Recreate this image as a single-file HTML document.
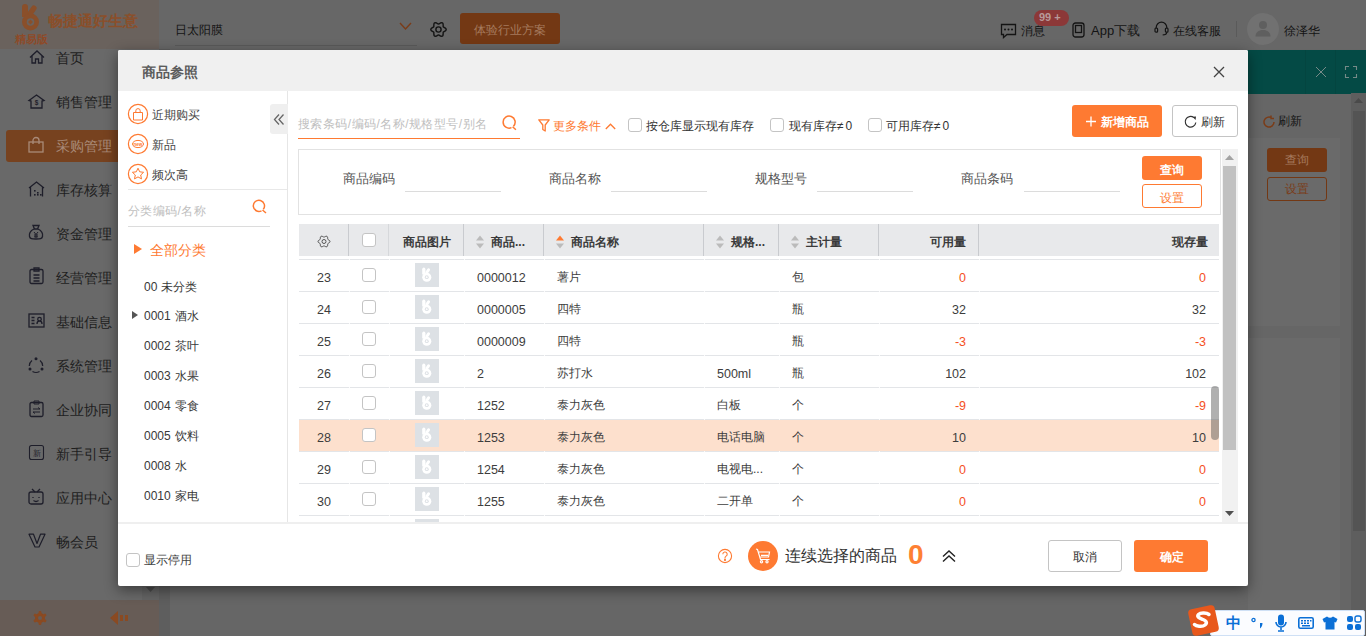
<!DOCTYPE html>
<html><head><meta charset="utf-8">
<style>
*{box-sizing:border-box;margin:0;padding:0}
html,body{width:1366px;height:636px;overflow:hidden;background:#666;font-family:"Liberation Sans",sans-serif;font-size:13px;color:#333}
.a{position:absolute}
.t{position:absolute;white-space:nowrap;line-height:1}
svg{position:absolute;overflow:visible}
.cb{position:absolute;width:14px;height:14px;border:1px solid #c4c4c4;border-radius:3px;background:#fff}
.hl{position:absolute;height:1px;background:#e3e5e8}
.vd{position:absolute;top:224px;width:1px;height:32px;background:#c9cbcf}
.c{position:absolute;white-space:nowrap;line-height:1;font-size:12px;color:#3d3d3d}
.r{color:#f5501e}
.img{position:absolute;left:415px;width:24px;height:24px;background:#dde1e5}
.tree{position:absolute;left:144px;font-size:12px;color:#383838;white-space:nowrap;line-height:1;word-spacing:.8px}
.mi{position:absolute;left:56px;font-size:14px;color:#1e1e1e;white-space:nowrap;line-height:1}
.sa{position:absolute;width:8px;height:13px}
</style></head><body>

<!-- ===== background app (dimmed) ===== -->
<div class="a" style="left:0;top:0;width:159px;height:636px;background:#696969"></div>
<div class="a" style="left:0;top:0;width:159px;height:49px;background:#6a625d"></div>
<div class="a" style="left:159px;top:0;width:1207px;height:49px;background:#676767"></div>
<div class="a" style="left:159px;top:49px;width:11px;height:587px;background:#5e5e5e"></div>
<div class="a" style="left:142px;top:560px;width:17px;height:40px;background:#646464"></div>
<svg style="left:146px;top:587px" width="9" height="6"><path d="M0 0h9l-4.5 5z" fill="#4a4a4a"/></svg>
<div class="a" style="left:0;top:600px;width:159px;height:36px;background:#675c56"></div>
<!-- bottom sidebar icons -->
<svg style="left:33px;top:611px" width="14" height="14" viewBox="0 0 14 14"><g fill="#8a4a22"><circle cx="7" cy="7" r="5"/><rect x="5.6" y="0" width="2.8" height="14" rx="1"/><rect x="5.6" y="0" width="2.8" height="14" rx="1" transform="rotate(60 7 7)"/><rect x="5.6" y="0" width="2.8" height="14" rx="1" transform="rotate(120 7 7)"/></g><circle cx="7" cy="7" r="2" fill="#675c56"/></svg>
<svg style="left:110px;top:611px" width="20" height="14" viewBox="0 0 20 14"><path d="M0 7L8 0v14z" fill="#8a4a22"/><rect x="10" y="4" width="3" height="6" fill="#8a4a22"/><rect x="15" y="4" width="3" height="6" fill="#8a4a22"/></svg>
<!-- logo -->
<svg style="left:20px;top:3px" width="20" height="28" viewBox="0 0 20 28"><path d="M2 4a3 3 0 0 1 6 0v10h-6z" fill="#8a4f2a"/><circle cx="10.5" cy="19" r="8.5" fill="#8a4f2a"/><rect x="9.5" y="2" width="5.5" height="11" rx="2.75" transform="rotate(35 12.25 7.5)" fill="#8a4f2a"/><circle cx="10.5" cy="19" r="3.8" fill="#6a625d"/><path d="M10.5 16.6l2.4 2.4-2.4 2.4-2.4-2.4z" fill="#8a4f2a"/></svg>
<div class="t" style="left:48px;top:13px;font-size:15px;color:#8a4f2a;font-weight:bold">畅捷通好生意</div>
<div class="t" style="left:15px;top:34px;font-size:10.5px;color:#8e4a28;font-weight:bold">精易版</div>
<!-- menu -->
<div class="a" style="left:6px;top:130px;width:112px;height:32px;background:#77421f;border-radius:3px 0 0 3px"></div>
<div class="mi" style="top:51px">首页</div>
<div class="mi" style="top:95px">销售管理</div>
<div class="mi" style="top:139px;color:#a98a78">采购管理</div>
<div class="mi" style="top:183px">库存核算</div>
<div class="mi" style="top:227px">资金管理</div>
<div class="mi" style="top:271px">经营管理</div>
<div class="mi" style="top:315px">基础信息</div>
<div class="mi" style="top:359px">系统管理</div>
<div class="mi" style="top:403px">企业协同</div>
<div class="mi" style="top:447px">新手引导</div>
<div class="mi" style="top:491px">应用中心</div>
<div class="mi" style="top:535px">畅会员</div>
<svg style="left:29px;top:50px" width="16" height="14" viewBox="0 0 16 14" fill="none" stroke="#1e1e2a" stroke-width="1.3"><path d="M1 7.5L8 1l7 6.5M3 6v7h3.5V9h3v4H13V6"/></svg>
<svg style="left:28px;top:94px" width="17" height="15" viewBox="0 0 17 15" fill="none" stroke="#1e1e2a" stroke-width="1.3"><path d="M1 6.5L8.5 1 16 6.5 14 7v7H3V7z"/><text x="8.5" y="10.5" font-size="6.5" text-anchor="middle" fill="#1e1e2a" stroke="none" font-weight="bold">$</text></svg>
<svg style="left:28px;top:137px" width="16" height="16" viewBox="0 0 16 16" fill="none" stroke="#a98a78" stroke-width="1.3"><rect x="1" y="5" width="14" height="10"/><path d="M5 7V3.5a3 3 0 0 1 6 0V7"/></svg>
<svg style="left:28px;top:181px" width="17" height="16" viewBox="0 0 17 16" fill="none" stroke="#1e1e2a" stroke-width="1.3"><path d="M1 7L8.5 1 16 7M2.5 6v9.5M14.5 6v9.5"/><g fill="#1e1e2a" stroke="none"><rect x="6" y="9" width="1.6" height="1.6"/><rect x="6" y="13" width="1.6" height="1.6"/><rect x="9" y="13" width="1.6" height="1.6"/><rect x="12" y="13" width="1.6" height="1.6"/><rect x="9" y="11" width="1.6" height="1.6"/></g></svg>
<svg style="left:28px;top:224px" width="16" height="16" viewBox="0 0 16 16" fill="none" stroke="#1e1e2a" stroke-width="1.3"><path d="M5 1.5h6L9.5 5h-3zM6 5C2 7 1 10 1.5 12.5 2 15 4 15 8 15s6 0 6.5-2.5C15 10 14 7 10 5"/><path d="M6 8l2 2.5L10 8M8 10.5v3.5M6 11h4M6 12.8h4" stroke-width="1"/></svg>
<svg style="left:29px;top:267px" width="15" height="17" viewBox="0 0 15 17" fill="none" stroke="#1e1e2a" stroke-width="1.3"><rect x="1" y="2.5" width="13" height="14" rx="1.5"/><path d="M5 1h5v3H5zM4.5 8h6M4.5 11h6M4.5 14h6"/></svg>
<svg style="left:28px;top:313px" width="17" height="15" viewBox="0 0 17 15" fill="none" stroke="#1e1e2a" stroke-width="1.3"><rect x="1" y="1" width="15" height="13"/><path d="M3.5 4.5h3M3.5 7.5h3M3.5 10.5h3M9 11c0-2 1-3 2.5-3s2.5 1 2.5 3M11.5 8a1.8 1.8 0 1 0 0-3.6 1.8 1.8 0 0 0 0 3.6z"/></svg>
<svg style="left:28px;top:357px" width="16" height="16" viewBox="0 0 16 16" fill="#1e1e2a"><circle cx="8" cy="1.7" r="1.5"/><circle cx="2" cy="12" r="1.5"/><circle cx="14" cy="12" r="1.5"/><path d="M4 3.5A7 7 0 0 0 1.3 9M12 3.5A7 7 0 0 1 14.7 9M4.5 14.5a7 7 0 0 0 7 0" fill="none" stroke="#1e1e2a" stroke-width="1.2"/></svg>
<svg style="left:29px;top:400px" width="15" height="17" viewBox="0 0 15 17" fill="none" stroke="#1e1e2a" stroke-width="1.3"><rect x="1" y="2.5" width="13" height="14" rx="1.5"/><path d="M5 1h5v3H5zM4 9h7l-2-1.5M11 12H4l2 1.5" stroke-width="1"/></svg>
<svg style="left:29px;top:445px" width="15" height="15" viewBox="0 0 15 15" fill="none" stroke="#1e1e2a" stroke-width="1.1"><rect x="0.5" y="0.5" width="14" height="14" rx="2"/><text x="7.5" y="11" font-size="8" text-anchor="middle" fill="#1e1e2a" stroke="none">新</text></svg>
<svg style="left:28px;top:488px" width="16" height="17" viewBox="0 0 16 17" fill="none" stroke="#1e1e2a" stroke-width="1.3"><rect x="1" y="4" width="14" height="12" rx="2"/><path d="M4 1l3 3M12 1L9 4M5 9v1M11 9v1M5.5 12.5q2.5 2 5 0"/></svg>
<svg style="left:28px;top:533px" width="18" height="15" viewBox="0 0 18 15" fill="none" stroke="#1e1e2a" stroke-width="1.2" stroke-linejoin="round"><path d="M1 1.2h4.5L9 10.5l3.5-9.3H17L11 14H7z"/></svg>
<!-- header -->
<div class="t" style="left:175px;top:24px;font-size:12px;color:#141414">日太阳膜</div>
<div class="a" style="left:175px;top:45px;width:242px;height:1px;background:#5a5a5a"></div>
<svg style="left:399px;top:22px" width="13" height="8" viewBox="0 0 13 8" fill="none" stroke="#7a3c18" stroke-width="1.4"><path d="M1 1l5.5 6L12 1"/></svg>
<svg style="left:430px;top:21px" width="17" height="17" viewBox="0 0 17 17" fill="none" stroke="#141414" stroke-width="1.4"><path d="M16.2 8.5 L15.9 9.3 L15.3 9.9 L14.5 10.4 L13.7 10.8 L13.3 11.2 L13.1 11.9 L13.2 12.7 L13.1 13.7 L12.9 14.6 L12.4 15.2 L11.5 15.3 L10.6 15.1 L9.8 14.6 L9.1 14.2 L8.5 14.0 L7.9 14.2 L7.2 14.6 L6.4 15.1 L5.5 15.3 L4.7 15.2 L4.1 14.6 L3.9 13.7 L3.8 12.7 L3.9 11.9 L3.7 11.2 L3.3 10.8 L2.5 10.4 L1.7 9.9 L1.1 9.3 L0.8 8.5 L1.1 7.7 L1.7 7.1 L2.5 6.6 L3.3 6.2 L3.7 5.8 L3.9 5.1 L3.8 4.3 L3.9 3.3 L4.1 2.4 L4.6 1.8 L5.5 1.7 L6.4 1.9 L7.2 2.4 L7.9 2.8 L8.5 3.0 L9.1 2.8 L9.8 2.4 L10.6 1.9 L11.5 1.7 L12.4 1.8 L12.9 2.4 L13.1 3.3 L13.2 4.3 L13.1 5.1 L13.3 5.8 L13.7 6.2 L14.5 6.6 L15.3 7.1 L15.9 7.7Z"/><circle cx="8.5" cy="8.5" r="2.6"/></svg>
<div class="a" style="left:460px;top:13px;width:100px;height:31px;background:#733814;border-radius:3px"></div>
<div class="t" style="left:474px;top:24px;font-size:12px;color:#a57a5e">体验行业方案</div>
<svg style="left:1000px;top:23px" width="17" height="16" viewBox="0 0 17 16" fill="none" stroke="#141414" stroke-width="1.3"><path d="M1.5 1.5h14v10H7l-3.5 3v-3h-2z"/><g fill="#141414" stroke="none"><circle cx="5" cy="6.5" r="1"/><circle cx="8.5" cy="6.5" r="1"/><circle cx="12" cy="6.5" r="1"/></g></svg>
<div class="t" style="left:1021px;top:25px;font-size:12px;color:#141414">消息</div>
<div class="a" style="left:1034px;top:10px;width:35px;height:16px;background:#8c3838;border-radius:8px"></div>
<div class="t" style="left:1039px;top:12px;font-size:11px;color:#b89a9a;font-weight:bold">99 +</div>
<svg style="left:1072px;top:22px" width="13" height="16" viewBox="0 0 13 16" fill="none" stroke="#141414" stroke-width="1.3"><rect x="1" y="1" width="11" height="14" rx="2.5"/><rect x="3.5" y="3.5" width="6" height="7"/></svg>
<div class="t" style="left:1091px;top:24px;font-size:13px;color:#141414">App下载</div>
<svg style="left:1154px;top:21px" width="15" height="15" viewBox="0 0 15 15" fill="none" stroke="#141414" stroke-width="1.2"><path d="M2.2 7.5V6.5a5.3 5.3 0 0 1 10.6 0v1"/><rect x="1" y="7" width="2.6" height="4.2" rx="1"/><rect x="11.4" y="7" width="2.6" height="4.2" rx="1"/><path d="M12.7 11.2q0 2.6-4 2.6"/></svg>
<div class="t" style="left:1173px;top:25px;font-size:12px;color:#141414">在线客服</div>
<div class="a" style="left:1236px;top:21px;width:1px;height:16px;background:#5a5a5a"></div>
<div class="a" style="left:1247px;top:13px;width:32px;height:32px;border-radius:50%;background:#717171"></div>
<svg style="left:1255px;top:20px" width="16" height="17" viewBox="0 0 16 17" fill="#5f5f5f"><circle cx="8" cy="5" r="4"/><path d="M0.5 16.5c0-4 3-6.5 7.5-6.5s7.5 2.5 7.5 6.5z"/></svg>
<div class="t" style="left:1284px;top:25px;font-size:12px;color:#141414">徐泽华</div>
<!-- right content behind -->
<div class="a" style="left:1200px;top:50px;width:166px;height:44px;background:#044a45"></div>
<div class="a" style="left:1305px;top:50px;width:1px;height:44px;background:#044540"></div>
<div class="a" style="left:1335px;top:50px;width:1px;height:44px;background:#044540"></div>
<svg style="left:1316px;top:67px" width="10" height="10" viewBox="0 0 10 10" stroke="#768a88" stroke-width="1"><path d="M0 0l10 10M10 0L0 10"/></svg>
<svg style="left:1345px;top:66px" width="12" height="12" viewBox="0 0 12 12" fill="none" stroke="#768a88" stroke-width="1.1"><path d="M.5 4V.5H4M8 .5h3.5V4M11.5 8v3.5H8M4 11.5H.5V8"/></svg>
<div class="a" style="left:1351px;top:93px;width:15px;height:543px;background:#5e5e5e"></div>
<svg style="left:1354px;top:98px" width="9" height="6"><path d="M0 5h9L4.5 0z" fill="#4a4a4a"/></svg>
<div class="a" style="left:1353px;top:111px;width:12px;height:420px;background:#545454"></div>
<svg style="left:1262px;top:115px" width="14" height="14" viewBox="0 0 14 14" fill="none" stroke="#7a3c18" stroke-width="1.5"><path d="M12 7A5 5 0 1 1 9.5 2.7M9 0.5v3h3"/></svg>
<div class="t" style="left:1278px;top:115px;font-size:12px;color:#141414">刷新</div>
<div class="a" style="left:1248px;top:138px;width:92px;height:188px;background:#6a6a6a"></div>
<div class="a" style="left:1267px;top:148px;width:60px;height:24px;background:#733814;border-radius:3px"></div>
<div class="t" style="left:1285px;top:154px;font-size:12px;color:#a57a5e">查询</div>
<div class="a" style="left:1267px;top:177px;width:60px;height:24px;border:1px solid #733814;border-radius:3px"></div>
<div class="t" style="left:1285px;top:183px;font-size:12px;color:#7a3c18">设置</div>
<div class="a" style="left:1248px;top:338px;width:92px;height:300px;background:#6a6a6a"></div>
<!-- IME toolbar -->
<div class="a" style="left:1210px;top:610px;width:155px;height:26px;background:#fbfcff;border:1px solid #cfe0f5;border-radius:2px"></div>
<svg style="left:1187px;top:604px" width="34" height="33" viewBox="0 0 34 33"><rect x="3" y="3" width="27" height="27" rx="4" fill="#e8581c" transform="rotate(-12 16.5 16.5)"/><path d="M22 10.5c-2-1.5-8-2.5-10.5 0s2 4 4.5 5 5 3 2 5.5-9 1-10.5-.5" fill="none" stroke="#fff" stroke-width="3.5" stroke-linecap="round"/></svg>
<div class="t" style="left:1226px;top:615px;font-size:15px;color:#0b6fd6;font-weight:bold">中</div>
<svg style="left:1251px;top:617px" width="13" height="12" viewBox="0 0 13 12" fill="#0b6fd6"><circle cx="2.5" cy="3" r="1.6" fill="none" stroke="#0b6fd6" stroke-width="1.3"/><path d="M9 6h2.5c0 2.5-1 4.5-2.5 5.5z"/></svg>
<svg style="left:1275px;top:614px" width="12" height="18" viewBox="0 0 12 18" fill="#0b6fd6"><rect x="3" y="0.5" width="6" height="11" rx="3"/><path d="M1 8a5 5 0 0 0 10 0M6 13v3M3 17h6" fill="none" stroke="#0b6fd6" stroke-width="1.6"/></svg>
<svg style="left:1298px;top:617px" width="16" height="12" viewBox="0 0 16 12"><rect x="0.8" y="0.8" width="14.4" height="10.4" rx="1.5" fill="none" stroke="#0b6fd6" stroke-width="1.6"/><g fill="#0b6fd6"><rect x="3" y="3" width="2" height="1.5"/><rect x="6" y="3" width="2" height="1.5"/><rect x="9" y="3" width="2" height="1.5"/><rect x="12" y="3" width="1.5" height="1.5"/><rect x="3" y="5.5" width="2" height="1.5"/><rect x="6" y="5.5" width="2" height="1.5"/><rect x="9" y="5.5" width="2" height="1.5"/><rect x="4" y="8" width="8" height="1.5"/></g></svg>
<svg style="left:1322px;top:616px" width="16" height="14" viewBox="0 0 16 14" fill="#0b6fd6"><path d="M5 0.5L0.5 3 2 6.5 3.5 6v7.5h9V6l1.5.5L15.5 3 11 .5Q8 3 5 .5z"/></svg>
<svg style="left:1347px;top:616px" width="14" height="14" viewBox="0 0 14 14" fill="#0b6fd6"><rect x="0" y="0" width="6" height="6" rx="2"/><rect x="8" y="0" width="6" height="6" rx="2" fill="none" stroke="#0b6fd6" stroke-width="1.4"/><rect x="0" y="8" width="6" height="6" rx="2"/><rect x="8" y="8" width="6" height="6" rx="2"/></svg>

<!-- ===== modal ===== -->
<div class="a" style="left:118px;top:50px;width:1130px;height:536px;background:#fff;border-radius:2px;box-shadow:0 4px 14px rgba(0,0,0,.45)"></div>
<div class="a" style="left:118px;top:50px;width:1130px;height:41px;background:#f0f0f0;border-radius:2px 2px 0 0"></div>
<div class="t" style="left:142px;top:65px;font-size:14px;color:#5c5c5c;font-weight:bold">商品参照</div>
<svg style="left:1213px;top:66px" width="12" height="12" viewBox="0 0 12 12" stroke="#444" stroke-width="1.3"><path d="M1 1l10 10M11 1L1 11"/></svg>

<!-- left panel -->
<div class="a" style="left:287px;top:91px;width:1px;height:431px;background:#e6e6e6"></div>
<svg style="left:127px;top:103px" width="22" height="82" viewBox="0 0 22 82" fill="none" stroke="#fe7a32" stroke-width="1.2">
<circle cx="11" cy="11" r="9.6"/><circle cx="11" cy="41" r="9.6"/><circle cx="11" cy="71" r="9.6"/>
<path d="M6.5 9.5h9v7.5h-9zM8.8 9.5V7.8a2.2 2.2 0 0 1 4.4 0v1.7" stroke-width="1"/>
<ellipse cx="11" cy="41" rx="5.5" ry="3.6" stroke-width="1"/><text x="11" y="42.8" font-size="4.5" text-anchor="middle" fill="#fe7a32" stroke="none" font-weight="bold">new</text>
<path d="M11 65.2l1.7 3.6 3.9.5-2.9 2.7.8 3.9-3.5-2-3.5 2 .8-3.9-2.9-2.7 3.9-.5z" stroke-width="1"/>
</svg>
<div class="t" style="left:152px;top:109px;font-size:12px;color:#444">近期购买</div>
<div class="t" style="left:152px;top:139px;font-size:12px;color:#444">新品</div>
<div class="t" style="left:152px;top:169px;font-size:12px;color:#444">频次高</div>
<div class="a" style="left:128px;top:189px;width:159px;height:1px;background:#e8e8e8"></div>
<div class="t" style="left:128px;top:205px;font-size:12px;color:#c0c0c0;letter-spacing:.4px">分类编码/名称</div>
<svg style="left:251px;top:199px" width="17" height="15" viewBox="0 0 17 15" fill="none" stroke="#fe7a32" stroke-width="1.5"><path d="M12.3 10.3A5.6 5.6 0 1 0 10.5 11.8M11.5 11l3.5 3"/></svg>
<div class="a" style="left:128px;top:226px;width:142px;height:1px;background:#dcdcdc"></div>
<svg style="left:134px;top:244px" width="8" height="10"><path d="M0 0l8 5-8 5z" fill="#fe7a32"/></svg>
<div class="t" style="left:150px;top:243px;font-size:14px;color:#fe7a32">全部分类</div>
<svg style="left:132px;top:311px" width="6" height="8"><path d="M0 0l6 4-6 4z" fill="#555"/></svg>
<div class="tree" style="top:281px">00 未分类</div>
<div class="tree" style="top:310px">0001 酒水</div>
<div class="tree" style="top:340px">0002 茶叶</div>
<div class="tree" style="top:370px">0003 水果</div>
<div class="tree" style="top:400px">0004 零食</div>
<div class="tree" style="top:430px">0005 饮料</div>
<div class="tree" style="top:460px">0008 水</div>
<div class="tree" style="top:490px">0010 家电</div>
<div class="a" style="left:270px;top:104px;width:18px;height:30px;background:#efefef;border-radius:3px 0 0 3px"></div>
<svg style="left:273px;top:113px" width="13" height="13" viewBox="0 0 13 13" fill="none" stroke="#666" stroke-width="1.3"><path d="M6 1.5L1.5 6.5 6 11.5M10.5 1.5L6 6.5l4.5 5"/></svg>

<!-- footer -->
<div class="a" style="left:118px;top:522px;width:1130px;height:2px;background:#efefef"></div>
<div class="cb" style="left:126px;top:553px"></div>
<div class="t" style="left:144px;top:554px;font-size:12px;color:#444">显示停用</div>
<svg style="left:717px;top:548px" width="16" height="16" viewBox="0 0 16 16" fill="none" stroke="#fe7a32" stroke-width="1.1"><circle cx="8" cy="8" r="6.6"/><path d="M5.8 6.2a2.2 2.2 0 1 1 3.3 1.9c-.8.5-1.1.9-1.1 1.8v.6"/><circle cx="8" cy="11.9" r=".5" fill="#fe7a32"/></svg>
<div class="a" style="left:748px;top:541px;width:30px;height:30px;border-radius:50%;background:#fe7a32"></div>
<svg style="left:755px;top:548px" width="16" height="16" viewBox="0 0 16 16" fill="none" stroke="#fff" stroke-width="1.2"><path d="M1 1l1.5.5L5.5 11.5h9M3.8 4h10.7l-1 5H5.5M6 7.3h7"/><circle cx="6.5" cy="13.8" r="1.1"/><circle cx="12" cy="13.8" r="1.1"/></svg>
<div class="t" style="left:785px;top:548px;font-size:16px;color:#333">连续选择的商品</div>
<div class="t" style="left:908px;top:541px;font-size:28px;color:#fe8033;font-weight:bold">0</div>
<svg style="left:942px;top:550px" width="14" height="13" viewBox="0 0 14 13" fill="none" stroke="#222" stroke-width="1.4"><path d="M1 6.5L7 1l6 5.5M1 11.5L7 6l6 5.5"/></svg>
<div class="a" style="left:1048px;top:540px;width:74px;height:32px;border:1px solid #c4c4c4;border-radius:3px;background:#fff"></div>
<div class="t" style="left:1073px;top:551px;font-size:12px;color:#333">取消</div>
<div class="a" style="left:1134px;top:540px;width:74px;height:32px;border-radius:3px;background:#fe7a32"></div>
<div class="t" style="left:1160px;top:551px;font-size:12px;color:#fff;font-weight:bold">确定</div>

<!-- toolbar -->
<div class="t" style="left:298px;top:118px;font-size:12px;color:#c0c0c0;letter-spacing:.45px">搜索条码/编码/名称/规格型号/别名</div>
<svg style="left:501px;top:115px" width="17" height="16" viewBox="0 0 17 16" fill="none" stroke="#fe7a32" stroke-width="1.5"><path d="M12.5 11.2A6 6 0 1 0 10.5 12.6M11.6 11.8l3.3 3"/></svg>
<div class="a" style="left:298px;top:138px;width:222px;height:1px;background:#fe7a32"></div>
<svg style="left:538px;top:119px" width="12" height="13" viewBox="0 0 12 13" fill="none" stroke="#fe7a32" stroke-width="1.3"><path d="M.8.8h10.4L7.2 6v6L4.8 10.5V6z" stroke-linejoin="round"/></svg>
<div class="t" style="left:553px;top:120px;font-size:12px;color:#fe7a32">更多条件</div>
<svg style="left:605px;top:123px" width="11" height="7" viewBox="0 0 11 7" fill="none" stroke="#fe7a32" stroke-width="1.3"><path d="M.8 6L5.5 1.2 10.2 6"/></svg>
<div class="cb" style="left:628px;top:118px"></div>
<div class="t" style="left:646px;top:120px;font-size:12px;color:#333">按仓库显示现有库存</div>
<div class="cb" style="left:770px;top:118px"></div>
<div class="t" style="left:789px;top:120px;font-size:12px;color:#333">现有库存<span style="letter-spacing:2px">≠0</span></div>
<div class="cb" style="left:868px;top:118px"></div>
<div class="t" style="left:886px;top:120px;font-size:12px;color:#333">可用库存<span style="letter-spacing:2px">≠0</span></div>
<div class="a" style="left:1072px;top:105px;width:90px;height:32px;border-radius:3px;background:#fe7a32"></div>
<svg style="left:1085px;top:116px" width="12" height="11" viewBox="0 0 12 11" stroke="#fff" stroke-width="1.3"><path d="M1 5.5h10M6 .5v10"/></svg>
<div class="t" style="left:1101px;top:116px;font-size:12px;color:#fff;font-weight:bold">新增商品</div>
<div class="a" style="left:1172px;top:105px;width:66px;height:32px;border:1px solid #c4c4c4;border-radius:3px;background:#fff"></div>
<svg style="left:1184px;top:115px" width="14" height="13" viewBox="0 0 14 13" fill="none" stroke="#333" stroke-width="1.2"><path d="M11.8 7.5A5.3 5.3 0 1 1 9.8 2.6"/><path d="M8.5 1.8L12 1.5l-.4 3.5z" fill="#333" stroke="none"/></svg>
<div class="t" style="left:1201px;top:116px;font-size:12px;color:#333">刷新</div>

<!-- filter box -->
<div class="a" style="left:298px;top:149px;width:923px;height:66px;border:1px solid #e2e2e2"></div>
<div class="t" style="left:343px;top:172px;font-size:13px;color:#555">商品编码</div>
<div class="a" style="left:405px;top:191px;width:96px;height:1px;background:#dcdcdc"></div>
<div class="t" style="left:549px;top:172px;font-size:13px;color:#555">商品名称</div>
<div class="a" style="left:611px;top:191px;width:96px;height:1px;background:#dcdcdc"></div>
<div class="t" style="left:755px;top:172px;font-size:13px;color:#555">规格型号</div>
<div class="a" style="left:817px;top:191px;width:96px;height:1px;background:#dcdcdc"></div>
<div class="t" style="left:961px;top:172px;font-size:13px;color:#555">商品条码</div>
<div class="a" style="left:1024px;top:191px;width:96px;height:1px;background:#dcdcdc"></div>
<div class="a" style="left:1142px;top:156px;width:60px;height:24px;border-radius:3px;background:#fe7a32"></div>
<div class="t" style="left:1160px;top:164px;font-size:12px;color:#fff;font-weight:bold">查询</div>
<div class="a" style="left:1142px;top:184px;width:60px;height:24px;border-radius:3px;border:1px solid #fe7a32;background:#fff"></div>
<div class="t" style="left:1160px;top:192px;font-size:12px;color:#fe7a32">设置</div>

<!-- table header -->
<div class="a" style="left:299px;top:224px;width:920px;height:32px;background:#e8e9eb"></div>
<div class="vd" style="left:348px"></div>
<div class="vd" style="left:388px;background:#d6d8db"></div>
<div class="vd" style="left:463px"></div>
<div class="vd" style="left:543px"></div>
<div class="vd" style="left:703px"></div>
<div class="vd" style="left:778px"></div>
<div class="vd" style="left:878px"></div>
<div class="vd" style="left:978px"></div>
<svg style="left:317px;top:235px" width="14" height="13" viewBox="0 0 14 13" fill="none" stroke="#555" stroke-width="1"><path d="M13.0 6.5 L12.7 7.3 L12.0 7.8 L11.3 8.3 L10.8 8.7 L10.7 9.3 L10.7 10.2 L10.5 11.1 L10.0 11.7 L9.2 11.8 L8.3 11.5 L7.6 11.1 L7.0 10.9 L6.4 11.1 L5.7 11.5 L4.8 11.8 L4.0 11.7 L3.5 11.1 L3.3 10.2 L3.3 9.3 L3.2 8.7 L2.7 8.3 L2.0 7.8 L1.3 7.3 L1.0 6.5 L1.3 5.7 L2.0 5.2 L2.7 4.7 L3.2 4.3 L3.3 3.7 L3.3 2.8 L3.5 1.9 L4.0 1.3 L4.8 1.2 L5.7 1.5 L6.4 1.9 L7.0 2.1 L7.6 1.9 L8.3 1.5 L9.2 1.2 L10.0 1.3 L10.5 1.9 L10.7 2.8 L10.7 3.7 L10.8 4.3 L11.3 4.7 L12.0 5.2 L12.7 5.7Z"/><circle cx="7" cy="6.5" r="2"/></svg>
<div class="cb" style="left:362px;top:233px"></div>
<div class="t" style="left:403px;top:236px;font-size:12px;color:#3a3a3a;font-weight:bold">商品图片</div>
<div class="t" style="left:491px;top:236px;font-size:12px;color:#3a3a3a;font-weight:bold">商品...</div>
<div class="t" style="left:571px;top:236px;font-size:12px;color:#3a3a3a;font-weight:bold">商品名称</div>
<div class="t" style="left:731px;top:236px;font-size:12px;color:#3a3a3a;font-weight:bold">规格...</div>
<div class="t" style="left:806px;top:236px;font-size:12px;color:#3a3a3a;font-weight:bold">主计量</div>
<div class="t" style="right:400px;top:236px;font-size:12px;color:#3a3a3a;font-weight:bold">可用量</div>
<div class="t" style="right:158px;top:236px;font-size:12px;color:#3a3a3a;font-weight:bold">现存量</div>
<svg style="left:476px;top:235px" width="9" height="14"><path d="M0 5.5L4 0.5 8 5.5z" fill="#bbb"/><path d="M0 8.5h8L4 13.5z" fill="#bbb"/></svg>
<svg style="left:556px;top:235px" width="9" height="14"><path d="M0 5.5L4 0.5 8 5.5z" fill="#fe7a32"/><path d="M0 8.5h8L4 13.5z" fill="#bbb"/></svg>
<svg style="left:716px;top:235px" width="9" height="14"><path d="M0 5.5L4 0.5 8 5.5z" fill="#bbb"/><path d="M0 8.5h8L4 13.5z" fill="#bbb"/></svg>
<svg style="left:791px;top:235px" width="9" height="14"><path d="M0 5.5L4 0.5 8 5.5z" fill="#bbb"/><path d="M0 8.5h8L4 13.5z" fill="#bbb"/></svg>

<!-- rows -->
<div id="rows">
<div class="a" style="left:299px;top:419px;width:920px;height:33px;background:#fde0cd"></div>
<div class="hl" style="left:299px;top:259px;width:920px"></div>
<div class="a" style="left:349px;top:259px;width:1px;height:1px;background:#fbfbfb"></div>
<div class="a" style="left:389px;top:259px;width:1px;height:1px;background:#fbfbfb"></div>
<div class="a" style="left:464px;top:259px;width:1px;height:1px;background:#fbfbfb"></div>
<div class="a" style="left:544px;top:259px;width:1px;height:1px;background:#fbfbfb"></div>
<div class="a" style="left:704px;top:259px;width:1px;height:1px;background:#fbfbfb"></div>
<div class="a" style="left:779px;top:259px;width:1px;height:1px;background:#fbfbfb"></div>
<div class="a" style="left:879px;top:259px;width:1px;height:1px;background:#fbfbfb"></div>
<div class="a" style="left:979px;top:259px;width:1px;height:1px;background:#fbfbfb"></div>
<div class="hl" style="left:299px;top:291px;width:920px"></div>
<div class="a" style="left:349px;top:291px;width:1px;height:1px;background:#fbfbfb"></div>
<div class="a" style="left:389px;top:291px;width:1px;height:1px;background:#fbfbfb"></div>
<div class="a" style="left:464px;top:291px;width:1px;height:1px;background:#fbfbfb"></div>
<div class="a" style="left:544px;top:291px;width:1px;height:1px;background:#fbfbfb"></div>
<div class="a" style="left:704px;top:291px;width:1px;height:1px;background:#fbfbfb"></div>
<div class="a" style="left:779px;top:291px;width:1px;height:1px;background:#fbfbfb"></div>
<div class="a" style="left:879px;top:291px;width:1px;height:1px;background:#fbfbfb"></div>
<div class="a" style="left:979px;top:291px;width:1px;height:1px;background:#fbfbfb"></div>
<div class="hl" style="left:299px;top:323px;width:920px"></div>
<div class="a" style="left:349px;top:323px;width:1px;height:1px;background:#fbfbfb"></div>
<div class="a" style="left:389px;top:323px;width:1px;height:1px;background:#fbfbfb"></div>
<div class="a" style="left:464px;top:323px;width:1px;height:1px;background:#fbfbfb"></div>
<div class="a" style="left:544px;top:323px;width:1px;height:1px;background:#fbfbfb"></div>
<div class="a" style="left:704px;top:323px;width:1px;height:1px;background:#fbfbfb"></div>
<div class="a" style="left:779px;top:323px;width:1px;height:1px;background:#fbfbfb"></div>
<div class="a" style="left:879px;top:323px;width:1px;height:1px;background:#fbfbfb"></div>
<div class="a" style="left:979px;top:323px;width:1px;height:1px;background:#fbfbfb"></div>
<div class="hl" style="left:299px;top:355px;width:920px"></div>
<div class="a" style="left:349px;top:355px;width:1px;height:1px;background:#fbfbfb"></div>
<div class="a" style="left:389px;top:355px;width:1px;height:1px;background:#fbfbfb"></div>
<div class="a" style="left:464px;top:355px;width:1px;height:1px;background:#fbfbfb"></div>
<div class="a" style="left:544px;top:355px;width:1px;height:1px;background:#fbfbfb"></div>
<div class="a" style="left:704px;top:355px;width:1px;height:1px;background:#fbfbfb"></div>
<div class="a" style="left:779px;top:355px;width:1px;height:1px;background:#fbfbfb"></div>
<div class="a" style="left:879px;top:355px;width:1px;height:1px;background:#fbfbfb"></div>
<div class="a" style="left:979px;top:355px;width:1px;height:1px;background:#fbfbfb"></div>
<div class="hl" style="left:299px;top:387px;width:920px"></div>
<div class="a" style="left:349px;top:387px;width:1px;height:1px;background:#fbfbfb"></div>
<div class="a" style="left:389px;top:387px;width:1px;height:1px;background:#fbfbfb"></div>
<div class="a" style="left:464px;top:387px;width:1px;height:1px;background:#fbfbfb"></div>
<div class="a" style="left:544px;top:387px;width:1px;height:1px;background:#fbfbfb"></div>
<div class="a" style="left:704px;top:387px;width:1px;height:1px;background:#fbfbfb"></div>
<div class="a" style="left:779px;top:387px;width:1px;height:1px;background:#fbfbfb"></div>
<div class="a" style="left:879px;top:387px;width:1px;height:1px;background:#fbfbfb"></div>
<div class="a" style="left:979px;top:387px;width:1px;height:1px;background:#fbfbfb"></div>
<div class="hl" style="left:299px;top:419px;width:920px"></div>
<div class="a" style="left:349px;top:419px;width:1px;height:1px;background:#fbfbfb"></div>
<div class="a" style="left:389px;top:419px;width:1px;height:1px;background:#fbfbfb"></div>
<div class="a" style="left:464px;top:419px;width:1px;height:1px;background:#fbfbfb"></div>
<div class="a" style="left:544px;top:419px;width:1px;height:1px;background:#fbfbfb"></div>
<div class="a" style="left:704px;top:419px;width:1px;height:1px;background:#fbfbfb"></div>
<div class="a" style="left:779px;top:419px;width:1px;height:1px;background:#fbfbfb"></div>
<div class="a" style="left:879px;top:419px;width:1px;height:1px;background:#fbfbfb"></div>
<div class="a" style="left:979px;top:419px;width:1px;height:1px;background:#fbfbfb"></div>
<div class="hl" style="left:299px;top:451px;width:920px"></div>
<div class="a" style="left:349px;top:451px;width:1px;height:1px;background:#fbfbfb"></div>
<div class="a" style="left:389px;top:451px;width:1px;height:1px;background:#fbfbfb"></div>
<div class="a" style="left:464px;top:451px;width:1px;height:1px;background:#fbfbfb"></div>
<div class="a" style="left:544px;top:451px;width:1px;height:1px;background:#fbfbfb"></div>
<div class="a" style="left:704px;top:451px;width:1px;height:1px;background:#fbfbfb"></div>
<div class="a" style="left:779px;top:451px;width:1px;height:1px;background:#fbfbfb"></div>
<div class="a" style="left:879px;top:451px;width:1px;height:1px;background:#fbfbfb"></div>
<div class="a" style="left:979px;top:451px;width:1px;height:1px;background:#fbfbfb"></div>
<div class="hl" style="left:299px;top:483px;width:920px"></div>
<div class="a" style="left:349px;top:483px;width:1px;height:1px;background:#fbfbfb"></div>
<div class="a" style="left:389px;top:483px;width:1px;height:1px;background:#fbfbfb"></div>
<div class="a" style="left:464px;top:483px;width:1px;height:1px;background:#fbfbfb"></div>
<div class="a" style="left:544px;top:483px;width:1px;height:1px;background:#fbfbfb"></div>
<div class="a" style="left:704px;top:483px;width:1px;height:1px;background:#fbfbfb"></div>
<div class="a" style="left:779px;top:483px;width:1px;height:1px;background:#fbfbfb"></div>
<div class="a" style="left:879px;top:483px;width:1px;height:1px;background:#fbfbfb"></div>
<div class="a" style="left:979px;top:483px;width:1px;height:1px;background:#fbfbfb"></div>
<div class="hl" style="left:299px;top:515px;width:920px"></div>
<div class="a" style="left:349px;top:515px;width:1px;height:1px;background:#fbfbfb"></div>
<div class="a" style="left:389px;top:515px;width:1px;height:1px;background:#fbfbfb"></div>
<div class="a" style="left:464px;top:515px;width:1px;height:1px;background:#fbfbfb"></div>
<div class="a" style="left:544px;top:515px;width:1px;height:1px;background:#fbfbfb"></div>
<div class="a" style="left:704px;top:515px;width:1px;height:1px;background:#fbfbfb"></div>
<div class="a" style="left:779px;top:515px;width:1px;height:1px;background:#fbfbfb"></div>
<div class="a" style="left:879px;top:515px;width:1px;height:1px;background:#fbfbfb"></div>
<div class="a" style="left:979px;top:515px;width:1px;height:1px;background:#fbfbfb"></div>
<div class="c" style="left:317px;top:272px;font-size:12.5px">23</div>
<div class="cb" style="left:362px;top:268px"></div>
<div class="img" style="top:263px"><svg style="left:6px;top:4px" width="11" height="15" viewBox="0 0 20 28"><path d="M2 4a3 3 0 0 1 6 0v10h-6z" fill="#fff"/><circle cx="10.5" cy="19" r="8.5" fill="#fff"/><rect x="9.5" y="2" width="5.5" height="11" rx="2.75" transform="rotate(35 12.25 7.5)" fill="#fff"/><circle cx="10.5" cy="19" r="3.6" fill="#dde1e5"/><path d="M10.5 16.8l2.2 2.2-2.2 2.2-2.2-2.2z" fill="#fff"/></svg></div>
<div class="c" style="left:477px;top:272px;font-size:12.5px">0000012</div>
<div class="c" style="left:557px;top:271px;font-size:12px">薯片</div>
<div class="c" style="left:792px;top:271px;font-size:12px">包</div>
<div class="c r" style="right:400px;top:272px;font-size:12.5px">0</div>
<div class="c r" style="right:160px;top:272px;font-size:12.5px">0</div>
<div class="c" style="left:317px;top:304px;font-size:12.5px">24</div>
<div class="cb" style="left:362px;top:300px"></div>
<div class="img" style="top:295px"><svg style="left:6px;top:4px" width="11" height="15" viewBox="0 0 20 28"><path d="M2 4a3 3 0 0 1 6 0v10h-6z" fill="#fff"/><circle cx="10.5" cy="19" r="8.5" fill="#fff"/><rect x="9.5" y="2" width="5.5" height="11" rx="2.75" transform="rotate(35 12.25 7.5)" fill="#fff"/><circle cx="10.5" cy="19" r="3.6" fill="#dde1e5"/><path d="M10.5 16.8l2.2 2.2-2.2 2.2-2.2-2.2z" fill="#fff"/></svg></div>
<div class="c" style="left:477px;top:304px;font-size:12.5px">0000005</div>
<div class="c" style="left:557px;top:303px;font-size:12px">四特</div>
<div class="c" style="left:792px;top:303px;font-size:12px">瓶</div>
<div class="c" style="right:400px;top:304px;font-size:12.5px">32</div>
<div class="c" style="right:160px;top:304px;font-size:12.5px">32</div>
<div class="c" style="left:317px;top:336px;font-size:12.5px">25</div>
<div class="cb" style="left:362px;top:332px"></div>
<div class="img" style="top:327px"><svg style="left:6px;top:4px" width="11" height="15" viewBox="0 0 20 28"><path d="M2 4a3 3 0 0 1 6 0v10h-6z" fill="#fff"/><circle cx="10.5" cy="19" r="8.5" fill="#fff"/><rect x="9.5" y="2" width="5.5" height="11" rx="2.75" transform="rotate(35 12.25 7.5)" fill="#fff"/><circle cx="10.5" cy="19" r="3.6" fill="#dde1e5"/><path d="M10.5 16.8l2.2 2.2-2.2 2.2-2.2-2.2z" fill="#fff"/></svg></div>
<div class="c" style="left:477px;top:336px;font-size:12.5px">0000009</div>
<div class="c" style="left:557px;top:335px;font-size:12px">四特</div>
<div class="c" style="left:792px;top:335px;font-size:12px">瓶</div>
<div class="c r" style="right:400px;top:336px;font-size:12.5px">-3</div>
<div class="c r" style="right:160px;top:336px;font-size:12.5px">-3</div>
<div class="c" style="left:317px;top:368px;font-size:12.5px">26</div>
<div class="cb" style="left:362px;top:364px"></div>
<div class="img" style="top:359px"><svg style="left:6px;top:4px" width="11" height="15" viewBox="0 0 20 28"><path d="M2 4a3 3 0 0 1 6 0v10h-6z" fill="#fff"/><circle cx="10.5" cy="19" r="8.5" fill="#fff"/><rect x="9.5" y="2" width="5.5" height="11" rx="2.75" transform="rotate(35 12.25 7.5)" fill="#fff"/><circle cx="10.5" cy="19" r="3.6" fill="#dde1e5"/><path d="M10.5 16.8l2.2 2.2-2.2 2.2-2.2-2.2z" fill="#fff"/></svg></div>
<div class="c" style="left:477px;top:368px;font-size:12.5px">2</div>
<div class="c" style="left:557px;top:367px;font-size:12px">苏打水</div>
<div class="c" style="left:717px;top:368px;font-size:12.5px">500ml</div>
<div class="c" style="left:792px;top:367px;font-size:12px">瓶</div>
<div class="c" style="right:400px;top:368px;font-size:12.5px">102</div>
<div class="c" style="right:160px;top:368px;font-size:12.5px">102</div>
<div class="c" style="left:317px;top:400px;font-size:12.5px">27</div>
<div class="cb" style="left:362px;top:396px"></div>
<div class="img" style="top:391px"><svg style="left:6px;top:4px" width="11" height="15" viewBox="0 0 20 28"><path d="M2 4a3 3 0 0 1 6 0v10h-6z" fill="#fff"/><circle cx="10.5" cy="19" r="8.5" fill="#fff"/><rect x="9.5" y="2" width="5.5" height="11" rx="2.75" transform="rotate(35 12.25 7.5)" fill="#fff"/><circle cx="10.5" cy="19" r="3.6" fill="#dde1e5"/><path d="M10.5 16.8l2.2 2.2-2.2 2.2-2.2-2.2z" fill="#fff"/></svg></div>
<div class="c" style="left:477px;top:400px;font-size:12.5px">1252</div>
<div class="c" style="left:557px;top:399px;font-size:12px">泰力灰色</div>
<div class="c" style="left:717px;top:399px;font-size:12px">白板</div>
<div class="c" style="left:792px;top:399px;font-size:12px">个</div>
<div class="c r" style="right:400px;top:400px;font-size:12.5px">-9</div>
<div class="c r" style="right:160px;top:400px;font-size:12.5px">-9</div>
<div class="c" style="left:317px;top:432px;font-size:12.5px">28</div>
<div class="cb" style="left:362px;top:428px"></div>
<div class="img" style="top:423px"><svg style="left:6px;top:4px" width="11" height="15" viewBox="0 0 20 28"><path d="M2 4a3 3 0 0 1 6 0v10h-6z" fill="#fff"/><circle cx="10.5" cy="19" r="8.5" fill="#fff"/><rect x="9.5" y="2" width="5.5" height="11" rx="2.75" transform="rotate(35 12.25 7.5)" fill="#fff"/><circle cx="10.5" cy="19" r="3.6" fill="#dde1e5"/><path d="M10.5 16.8l2.2 2.2-2.2 2.2-2.2-2.2z" fill="#fff"/></svg></div>
<div class="c" style="left:477px;top:432px;font-size:12.5px">1253</div>
<div class="c" style="left:557px;top:431px;font-size:12px">泰力灰色</div>
<div class="c" style="left:717px;top:431px;font-size:12px">电话电脑</div>
<div class="c" style="left:792px;top:431px;font-size:12px">个</div>
<div class="c" style="right:400px;top:432px;font-size:12.5px">10</div>
<div class="c" style="right:160px;top:432px;font-size:12.5px">10</div>
<div class="c" style="left:317px;top:464px;font-size:12.5px">29</div>
<div class="cb" style="left:362px;top:460px"></div>
<div class="img" style="top:455px"><svg style="left:6px;top:4px" width="11" height="15" viewBox="0 0 20 28"><path d="M2 4a3 3 0 0 1 6 0v10h-6z" fill="#fff"/><circle cx="10.5" cy="19" r="8.5" fill="#fff"/><rect x="9.5" y="2" width="5.5" height="11" rx="2.75" transform="rotate(35 12.25 7.5)" fill="#fff"/><circle cx="10.5" cy="19" r="3.6" fill="#dde1e5"/><path d="M10.5 16.8l2.2 2.2-2.2 2.2-2.2-2.2z" fill="#fff"/></svg></div>
<div class="c" style="left:477px;top:464px;font-size:12.5px">1254</div>
<div class="c" style="left:557px;top:463px;font-size:12px">泰力灰色</div>
<div class="c" style="left:717px;top:463px;font-size:12px">电视电...</div>
<div class="c" style="left:792px;top:463px;font-size:12px">个</div>
<div class="c r" style="right:400px;top:464px;font-size:12.5px">0</div>
<div class="c r" style="right:160px;top:464px;font-size:12.5px">0</div>
<div class="c" style="left:317px;top:496px;font-size:12.5px">30</div>
<div class="cb" style="left:362px;top:492px"></div>
<div class="img" style="top:487px"><svg style="left:6px;top:4px" width="11" height="15" viewBox="0 0 20 28"><path d="M2 4a3 3 0 0 1 6 0v10h-6z" fill="#fff"/><circle cx="10.5" cy="19" r="8.5" fill="#fff"/><rect x="9.5" y="2" width="5.5" height="11" rx="2.75" transform="rotate(35 12.25 7.5)" fill="#fff"/><circle cx="10.5" cy="19" r="3.6" fill="#dde1e5"/><path d="M10.5 16.8l2.2 2.2-2.2 2.2-2.2-2.2z" fill="#fff"/></svg></div>
<div class="c" style="left:477px;top:496px;font-size:12.5px">1255</div>
<div class="c" style="left:557px;top:495px;font-size:12px">泰力灰色</div>
<div class="c" style="left:717px;top:495px;font-size:12px">二开单</div>
<div class="c" style="left:792px;top:495px;font-size:12px">个</div>
<div class="c r" style="right:400px;top:496px;font-size:12.5px">0</div>
<div class="c r" style="right:160px;top:496px;font-size:12.5px">0</div>
<div class="img" style="top:519px;height:3px"></div>
</div><!--/rows-->

<!-- scrollbar -->
<div class="a" style="left:1222px;top:149px;width:16px;height:373px;background:#f1f1f1"></div>
<svg style="left:1225px;top:155px" width="9" height="6"><path d="M0 5h9L4.5 0z" fill="#a3a3a3"/></svg>
<div class="a" style="left:1223px;top:166px;width:13px;height:284px;background:#c1c1c1"></div>
<svg style="left:1225px;top:511px" width="9" height="6"><path d="M0 0h9L4.5 5z" fill="#505050"/></svg>
<div class="a" style="left:1211px;top:386px;width:8px;height:54px;border-radius:4px;background:rgba(80,80,80,.45)"></div>

</body></html>
